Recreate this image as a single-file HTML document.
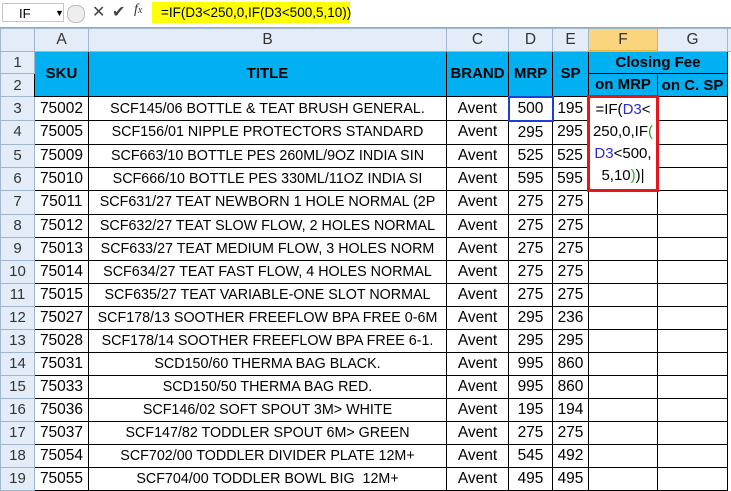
<!DOCTYPE html>
<html><head><style>
body{margin:0;width:731px;height:491px;overflow:hidden;background:#fff;font-family:"Liberation Sans",Arial,sans-serif;position:relative}
.fb{position:absolute;left:0;top:0;width:731px;height:25px;background:#fff;border-bottom:1px solid #a5a5a5}
.nb{position:absolute;left:2px;top:3px;width:62px;height:19px;border:1px solid #c6c6c6;font-size:13px;line-height:19px;padding-left:16px;box-sizing:border-box}
.yel{position:absolute;left:152px;top:2px;width:198px;height:21px;background:#ffff00;font-size:13.5px;line-height:21px;padding-left:9px;box-sizing:border-box}
.gap{position:absolute;left:0;top:25px;width:731px;height:2px;background:#fff;border-bottom:1px solid #a5a5a5}
table{position:absolute;left:0;top:28px;border-collapse:collapse;table-layout:fixed;width:737px}
td{height:22px;max-height:22px;padding:0;font-size:15.5px;text-align:center;white-space:nowrap;overflow:hidden;border:1px solid #000;line-height:20px}
td.rh{background:#e4ecf7;border:1px solid #9eb6ce;color:#333;font-size:15px}
tr.ch td{height:21px;background:#e4ecf7;border:1px solid #9eb6ce;color:#333;font-size:15.5px;line-height:19px}
tr.ch td.f{background:#fbd57e;border-bottom:2px solid #f2b63c}
tr.hr td{height:21px;line-height:19px}
.h{background:#00b0f0;font-weight:bold;font-size:15px}
.t{font-size:14.3px}
.a{font-size:15.5px}
</style></head><body>
<div class="fb">
<div class="nb">IF<span style="position:absolute;left:52px;top:0;font-size:9px">▼</span></div>
<div style="position:absolute;left:67px;top:5px;width:16px;height:16px;border-radius:8px;border:1px solid #bbb;background:#eee"></div>
<div style="position:absolute;left:92px;top:2px;font-size:16px;color:#444">✕</div>
<div style="position:absolute;left:112px;top:2px;font-size:16px;color:#444">✔</div>
<div style="position:absolute;left:134px;top:2px;font-size:14px;font-style:italic;font-family:'Liberation Serif',serif;color:#333">f<span style="font-size:10px">x</span></div>
<div class="yel">=IF(D3&lt;250,0,IF(D3&lt;500,5,10))</div>
</div>
<div class="gap"></div>
<table>
<colgroup><col style="width:34px"><col style="width:54px"><col style="width:358px"><col style="width:62px"><col style="width:44px"><col style="width:36px"><col style="width:69px"><col style="width:70px"><col style="width:10px"></colgroup>
<tr class="ch"><td style="background:#e4ecf7"></td><td>A</td><td>B</td><td>C</td><td>D</td><td>E</td><td class="f">F</td><td>G</td><td></td></tr>
<tr class="hr"><td class="rh">1</td><td class="h" rowspan="2">SKU</td><td class="h" rowspan="2">TITLE</td><td class="h" rowspan="2">BRAND</td><td class="h" rowspan="2">MRP</td><td class="h" rowspan="2">SP</td><td class="h" colspan="2">Closing Fee</td><td style="border:none"></td></tr>
<tr class="hr"><td class="rh">2</td><td class="h">on MRP</td><td class="h">on C. SP</td><td style="border:none"></td></tr>
<tr><td class="rh">3</td><td>75002</td><td class="t">SCF145/06 BOTTLE &amp; TEAT BRUSH GENERAL.</td><td class="a">Avent</td><td style="border:2px solid #1a3fd6">500</td><td>195</td><td rowspan="4" style="border:3px solid #e8141c;white-space:normal;line-height:22px;vertical-align:top;padding-top:1px;font-size:15px;height:88px">=IF(<span style="color:#2b2bd6">D3</span>&lt;<br>250,0,IF<span style="color:#2aa82a">(</span><br><span style="color:#2b2bd6">D3</span>&lt;500,<br>5,10<span style="color:#2aa82a">)</span>)|</td><td></td><td style="border:none"></td></tr>
<tr><td class="rh">4</td><td>75005</td><td class="t">SCF156/01 NIPPLE PROTECTORS STANDARD</td><td class="a">Avent</td><td>295</td><td>295</td><td></td><td style="border:none"></td></tr>
<tr><td class="rh">5</td><td>75009</td><td class="t">SCF663/10 BOTTLE PES 260ML/9OZ INDIA SIN</td><td class="a">Avent</td><td>525</td><td>525</td><td></td><td style="border:none"></td></tr>
<tr><td class="rh">6</td><td>75010</td><td class="t">SCF666/10 BOTTLE PES 330ML/11OZ INDIA SI</td><td class="a">Avent</td><td>595</td><td>595</td><td></td><td style="border:none"></td></tr>
<tr><td class="rh">7</td><td>75011</td><td class="t">SCF631/27 TEAT NEWBORN 1 HOLE NORMAL (2P</td><td class="a">Avent</td><td>275</td><td>275</td><td></td><td></td><td style="border:none"></td></tr>
<tr><td class="rh">8</td><td>75012</td><td class="t">SCF632/27 TEAT SLOW FLOW, 2 HOLES NORMAL</td><td class="a">Avent</td><td>275</td><td>275</td><td></td><td></td><td style="border:none"></td></tr>
<tr><td class="rh">9</td><td>75013</td><td class="t">SCF633/27 TEAT MEDIUM FLOW, 3 HOLES NORM</td><td class="a">Avent</td><td>275</td><td>275</td><td></td><td></td><td style="border:none"></td></tr>
<tr><td class="rh">10</td><td>75014</td><td class="t">SCF634/27 TEAT FAST FLOW, 4 HOLES NORMAL</td><td class="a">Avent</td><td>275</td><td>275</td><td></td><td></td><td style="border:none"></td></tr>
<tr><td class="rh">11</td><td>75015</td><td class="t">SCF635/27 TEAT VARIABLE-ONE SLOT NORMAL</td><td class="a">Avent</td><td>275</td><td>275</td><td></td><td></td><td style="border:none"></td></tr>
<tr><td class="rh">12</td><td>75027</td><td class="t">SCF178/13 SOOTHER FREEFLOW BPA FREE 0-6M</td><td class="a">Avent</td><td>295</td><td>236</td><td></td><td></td><td style="border:none"></td></tr>
<tr><td class="rh">13</td><td>75028</td><td class="t">SCF178/14 SOOTHER FREEFLOW BPA FREE 6-1.</td><td class="a">Avent</td><td>295</td><td>295</td><td></td><td></td><td style="border:none"></td></tr>
<tr><td class="rh">14</td><td>75031</td><td class="t">SCD150/60 THERMA BAG BLACK.</td><td class="a">Avent</td><td>995</td><td>860</td><td></td><td></td><td style="border:none"></td></tr>
<tr><td class="rh">15</td><td>75033</td><td class="t">SCD150/50 THERMA BAG RED.</td><td class="a">Avent</td><td>995</td><td>860</td><td></td><td></td><td style="border:none"></td></tr>
<tr><td class="rh">16</td><td>75036</td><td class="t">SCF146/02 SOFT SPOUT 3M&gt; WHITE</td><td class="a">Avent</td><td>195</td><td>194</td><td></td><td></td><td style="border:none"></td></tr>
<tr><td class="rh">17</td><td>75037</td><td class="t">SCF147/82 TODDLER SPOUT 6M&gt; GREEN</td><td class="a">Avent</td><td>275</td><td>275</td><td></td><td></td><td style="border:none"></td></tr>
<tr><td class="rh">18</td><td>75054</td><td class="t">SCF702/00 TODDLER DIVIDER PLATE 12M+</td><td class="a">Avent</td><td>545</td><td>492</td><td></td><td></td><td style="border:none"></td></tr>
<tr><td class="rh">19</td><td>75055</td><td class="t">SCF704/00 TODDLER BOWL BIG &nbsp;12M+</td><td class="a">Avent</td><td>495</td><td>495</td><td></td><td></td><td style="border:none"></td></tr>
</table>
</body></html>
